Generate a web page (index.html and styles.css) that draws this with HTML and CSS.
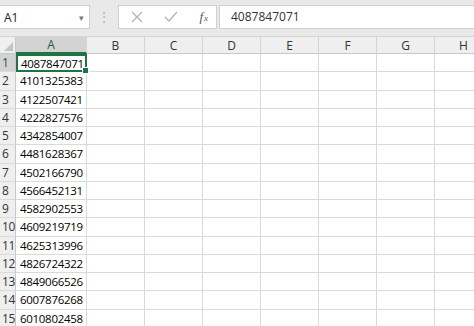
FILE: index.html
```html
<!DOCTYPE html>
<html lang="en">
<head>
    <meta charset="UTF-8">
    <title>Sheet</title>
    <link rel="stylesheet" href="styles.css">
</head>
<body>
    <!-- Name box + formula bar -->
    <div class="toolbar">
        <div class="name-box">
            <span>A1</span>
            <span class="caret">&#9662;</span>
        </div>
        <div class="grip">&#8942;</div>
        <div class="fx-buttons">
            <svg width="12" height="12" viewBox="0 0 12 12"><path d="M1 1 L11 11 M11 1 L1 11" stroke="#b4b4b4" stroke-width="1.3" fill="none"/></svg>
            <svg width="14" height="12" viewBox="0 0 14 12"><path d="M1 6 L5 10 L13 1" stroke="#b4b4b4" stroke-width="1.3" fill="none"/></svg>
            <span class="fx"><i>f</i><i class="x">x</i></span>
        </div>
        <div class="formula">4087847071</div>
    </div>

    <div class="sheet" id="sheet"></div>

    <script>
        const values = [
            "4087847071", "4101325383", "4122507421", "4222827576", "4342854007",
            "4481628367", "4502166790", "4566452131", "4582902553", "4609219719",
            "4625313996", "4826724322", "4849066526", "6007876268", "6010802458"
        ];
        const cols = ["A", "B", "C", "D", "E", "F", "G", "H"];

        // Header row
        let html = `<div class="corner"></div>`;
        cols.forEach(c => {
            html += `<div class="col-head${c === "A" ? " active" : ""}">${c}</div>`;
        });

        // Data rows
        values.forEach((v, i) => {
            html += `<div class="row-head${i === 0 ? " active" : ""}">${i + 1}</div>`;
            cols.forEach(c => {
                const sel = (i === 0 && c === "A") ? " selected" : "";
                html += `<div class="cell${sel}">${c === "A" ? v : ""}</div>`;
            });
        });

        document.getElementById("sheet").innerHTML = html;
    </script>
</body>
</html>
```

FILE: styles.css
```css
* {
    box-sizing: border-box;
    margin: 0;
    padding: 0;
}

body {
    font-family: 'Open Sans', 'Liberation Sans', sans-serif;
    font-size: 11px;
    color: #222;
    background-color: #fff;
    width: 474px;
    height: 326px;
    overflow: hidden;
}

/* Toolbar with name box and formula bar */
.toolbar {
    display: flex;
    align-items: flex-start;
    height: 37px;
    padding-top: 5px;
    background-color: #e9e9e9;
    border-bottom: 1px solid #d4d4d4;
}

.name-box {
    display: flex;
    justify-content: space-between;
    align-items: center;
    width: 90px;
    height: 24px;
    padding: 0 5px 0 4px;
    background-color: #fff;
    border: 1px solid #d0d0d0;
    border-left: none;
    font-size: 12px;
}

.name-box .caret {
    font-size: 9px;
    color: #777;
}

.grip {
    width: 28px;
    text-align: center;
    line-height: 24px;
    color: #b0b0b0;
    font-size: 12px;
}

.fx-buttons {
    display: flex;
    align-items: center;
    justify-content: space-between;
    width: 99px;
    height: 24px;
    padding: 0 8px 0 12px;
    background-color: #fff;
    border: 1px solid #d0d0d0;
}

.fx {
    font-family: 'Liberation Serif', serif;
    font-size: 13px;
    color: #555;
}

.fx .x {
    font-size: 9px;
    margin-left: 1px;
}

.formula {
    flex: 1;
    height: 24px;
    margin-left: 2px;
    padding-left: 11px;
    line-height: 22px;
    background-color: #fff;
    border: 1px solid #d0d0d0;
    border-right: none;
    font-size: 12px;
    color: #333;
}

/* Grid */
.sheet {
    display: grid;
    grid-template-columns: 16px 71px repeat(7, 58px);
    grid-template-rows: 17px repeat(15, 18.25px);
}

.corner {
    position: relative;
    background-color: #efefef;
    border-right: 1px solid #c8c8c8;
    border-bottom: 1px solid #c8c8c8;
}

.corner::after {
    content: "";
    position: absolute;
    right: 2px;
    bottom: 2px;
    border-left: 9px solid transparent;
    border-bottom: 9px solid #c4c4c4;
}

.col-head {
    display: flex;
    align-items: center;
    justify-content: center;
    background-color: #efefef;
    border-right: 1px solid #d4d4d4;
    border-bottom: 1px solid #c8c8c8;
    color: #333;
    font-size: 12px;
}

.col-head.active {
    background-color: #d3d3d3;
    border-bottom: 2px solid #217346;
    color: #2a5a40;
}

.row-head {
    display: flex;
    align-items: center;
    padding-left: 2px;
    background-color: #efefef;
    border-right: 1px solid #c8c8c8;
    border-bottom: 1px solid #dadada;
    color: #333;
    font-size: 12px;
    letter-spacing: -0.4px;
    overflow: hidden;
    white-space: nowrap;
}

.row-head.active {
    background-color: #d3d3d3;
    color: #2a5a40;
}

.cell {
    display: flex;
    align-items: center;
    padding-left: 4px;
    border-right: 1px solid #dadada;
    border-bottom: 1px solid #dadada;
    font-size: 11.5px;
    letter-spacing: -0.3px;
    color: #000;
    white-space: nowrap;
}

.cell.selected {
    position: relative;
    border: 2px solid #217346;
    padding-left: 3px;
}

.cell.selected::after {
    content: "";
    position: absolute;
    right: -4px;
    bottom: -4px;
    width: 5px;
    height: 5px;
    background-color: #217346;
    border: 1px solid #fff;
}
```
